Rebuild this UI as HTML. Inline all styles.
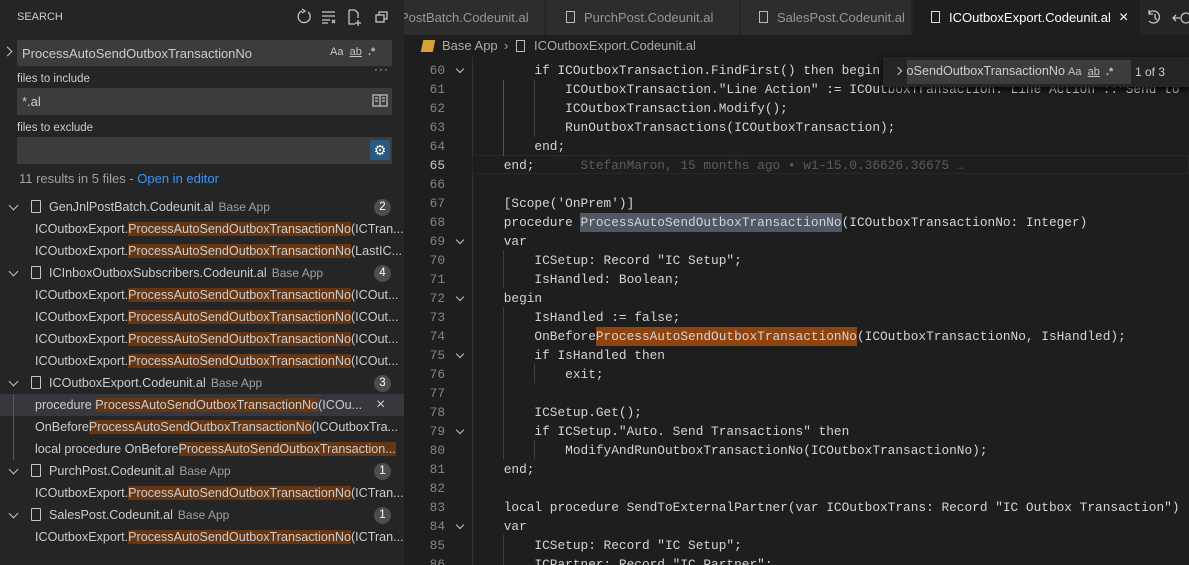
<!DOCTYPE html>
<html style="overflow:hidden;width:1189px;height:565px"><head><meta charset="utf-8"><style>
*{margin:0;padding:0;box-sizing:border-box}
body{width:1189px;height:565px;overflow:hidden;background:#1e1e1e;font-family:"Liberation Sans",sans-serif;color:#cccccc;position:relative}
#wrap{position:absolute;left:0;top:0;width:1189px;height:565px;overflow:hidden}
.abs{position:absolute}
#side{left:0;top:0;width:404px;height:565px;background:#252526}
.lbl{font-size:11.5px;color:#cccccc}
.inp{background:#3c3c3c;height:26px}
.row{position:absolute;left:0;width:404px;height:22px;line-height:22px;font-size:12.6px;white-space:nowrap;overflow:hidden}
.m{left:35px;width:369px}
.hl{background:#653613}
.fn{left:49px}
.ba{color:#a0a0a0;font-size:12px;margin-left:5px}
.badge{position:absolute;left:374px;top:3px;width:17px;height:17px;border-radius:50%;background:#4d4d4d;color:#fff;font-size:11.5px;line-height:17px;text-align:center}
.chev{position:absolute;left:10px;top:6px;width:7px;height:7px;border-right:1.3px solid #c5c5c5;border-bottom:1.3px solid #c5c5c5;transform:rotate(45deg)}
.fi{position:absolute;left:31px;top:4px;width:10px;height:13px;border:1.2px solid #c5c5c5;border-radius:1px}
#tabs{left:404px;top:0;width:785px;height:35px;background:#252526}
.tab{position:absolute;top:0;height:35px;line-height:35px;font-size:13px;color:#969696;white-space:nowrap;border-right:1px solid #252526;background:#2d2d2d}
.tfi{display:inline-block;width:9px;height:12px;border:1.2px solid #bbb;vertical-align:-1px;margin-right:9px}
.code{font-family:"Liberation Mono",monospace;font-size:12.8px;color:#d4d4d4;white-space:pre}
.ln{position:absolute;left:405px;width:40px;text-align:right;font-family:"Liberation Mono",monospace;font-size:12.8px;color:#858585;height:19px;line-height:19px}
.cl{position:absolute;left:473px;height:19px;line-height:19px}
.fold{position:absolute;left:457px;width:6px;height:6px;border-right:1.2px solid #c5c5c5;border-bottom:1.2px solid #c5c5c5;transform:rotate(45deg)}
.g{position:absolute;width:1px;background:#404040}
</style></head><body><div id="wrap">
<div id="side" class="abs">
 <div class="abs lbl" style="left:17px;top:11px;font-size:11px">SEARCH</div>
 <svg class="abs" style="left:294px;top:8px" width="100" height="18" viewBox="0 0 100 18" fill="none" stroke="#c5c5c5" stroke-width="1.3">
  <path d="M14 4 A6 6 0 1 1 8 3"/><path d="M8 1 L11 3 L8 5"/>
  <path d="M28 4h13M28 8h13M28 12h8M28 15h6M38 12l3 3M41 12l-3 3"/>
  <path d="M55 2h6l3 3v5M55 2v14h6M64 12v6M61 15h6"/>
  <rect x="82" y="7" width="8" height="7"/><path d="M85 7V4h8v7h-3"/>
 </svg>
 <div class="abs" style="left:4px;top:48px;width:7px;height:7px;border-right:1.3px solid #c5c5c5;border-top:1.3px solid #c5c5c5;transform:rotate(45deg)"></div>
 <div class="abs inp" style="left:17px;top:40px;width:375px;height:26px"></div>
 <div class="abs" style="left:22px;top:46px;font-size:13px;color:#cccccc">ProcessAutoSendOutboxTransactionNo</div>
 <div class="abs" style="left:330px;top:46px;font-size:11px;color:#c5c5c5">Aa &nbsp;<u>ab</u>&nbsp; <b>.*</b></div>
 <div class="abs" style="left:374px;top:62px;font-size:12px;color:#c5c5c5;letter-spacing:1px">···</div>
 <div class="abs lbl" style="left:17px;top:73px">files to include</div>
 <div class="abs inp" style="left:17px;top:88px;width:375px;height:27px"></div>
 <div class="abs" style="left:22px;top:94px;font-size:13px">*.al</div>
 <svg class="abs" style="left:372px;top:94px" width="16" height="14" fill="none" stroke="#c5c5c5" stroke-width="1.2"><rect x="1" y="1" width="14" height="11"/><path d="M8 1v11M3 4h3M3 7h3M10 4h3M10 7h3"/></svg>
 <div class="abs lbl" style="left:17px;top:122px">files to exclude</div>
 <div class="abs inp" style="left:17px;top:137px;width:375px;height:27px"></div>
 <div class="abs" style="left:370px;top:140px;width:20px;height:20px;background:#2a5a82;border-radius:2px;color:#fff;font-size:14px;text-align:center;line-height:20px">⚙</div>
 <div class="abs" style="left:19px;top:171px;font-size:13px;color:#a0a0a0">11 results in 5 files - <span style="color:#3794ff">Open in editor</span></div>

 <div class="row" style="top:196px"><div class="chev"></div><div class="fi"></div><span class="abs fn">GenJnlPostBatch.Codeunit.al<span class="ba">Base App</span></span><div class="badge">2</div></div>
 <div class="row m" style="top:218px">ICOutboxExport.<span class="hl">ProcessAutoSendOutboxTransactionNo</span>(ICTran...</div>
 <div class="row m" style="top:240px">ICOutboxExport.<span class="hl">ProcessAutoSendOutboxTransactionNo</span>(LastIC...</div>
 <div class="row" style="top:262px"><div class="chev"></div><div class="fi"></div><span class="abs fn">ICInboxOutboxSubscribers.Codeunit.al<span class="ba">Base App</span></span><div class="badge">4</div></div>
 <div class="row m" style="top:284px">ICOutboxExport.<span class="hl">ProcessAutoSendOutboxTransactionNo</span>(ICOut...</div>
 <div class="row m" style="top:306px">ICOutboxExport.<span class="hl">ProcessAutoSendOutboxTransactionNo</span>(ICOut...</div>
 <div class="row m" style="top:328px">ICOutboxExport.<span class="hl">ProcessAutoSendOutboxTransactionNo</span>(ICOut...</div>
 <div class="row m" style="top:350px">ICOutboxExport.<span class="hl">ProcessAutoSendOutboxTransactionNo</span>(ICOut...</div>
 <div class="row" style="top:372px"><div class="chev"></div><div class="fi"></div><span class="abs fn">ICOutboxExport.Codeunit.al<span class="ba">Base App</span></span><div class="badge">3</div></div>
 <div class="row" style="top:394px;background:#37373d"><span class="abs" style="left:35px">procedure <span class="hl">ProcessAutoSendOutboxTransactionNo</span>(ICOu...</span><span class="abs" style="left:376px;font-size:16px">×</span></div>
 <div class="row m" style="top:416px">OnBefore<span class="hl">ProcessAutoSendOutboxTransactionNo</span>(ICOutboxTra...</div>
 <div class="row m" style="top:438px">local procedure OnBefore<span class="hl">ProcessAutoSendOutboxTransaction...</span></div>
 <div class="abs" style="left:13px;top:394px;width:1px;height:66px;background:#585858"></div>
 <div class="row" style="top:460px"><div class="chev"></div><div class="fi"></div><span class="abs fn">PurchPost.Codeunit.al<span class="ba">Base App</span></span><div class="badge">1</div></div>
 <div class="row m" style="top:482px">ICOutboxExport.<span class="hl">ProcessAutoSendOutboxTransactionNo</span>(ICTran...</div>
 <div class="row" style="top:504px"><div class="chev"></div><div class="fi"></div><span class="abs fn">SalesPost.Codeunit.al<span class="ba">Base App</span></span><div class="badge">1</div></div>
 <div class="row m" style="top:526px">ICOutboxExport.<span class="hl">ProcessAutoSendOutboxTransactionNo</span>(ICTran...</div>
</div>

<div id="tabs" class="abs">
 <div class="tab" style="left:0;width:141px;overflow:hidden"><span style="margin-left:-4px">PostBatch.Codeunit.al</span></div>
 <div class="tab" style="left:142px;width:194px;padding-left:20px"><span class="tfi"></span>PurchPost.Codeunit.al</div>
 <div class="tab" style="left:337px;width:171px;padding-left:18px"><span class="tfi"></span>SalesPost.Codeunit.al</div>
 <div class="tab" style="left:509px;width:228px;padding-left:18px;background:#1e1e1e;color:#fff"><span class="tfi" style="border-color:#ddd"></span>ICOutboxExport.Codeunit.al<span style="position:absolute;left:206px;font-size:16px">×</span></div>
 <svg class="abs" style="left:742px;top:9px" width="43" height="18" fill="none" stroke="#c5c5c5" stroke-width="1.3"><path d="M3 4A6 6 0 1 1 3 12M3 1v4h4M9 5v4l2 2"/><path d="M34 9h-6M30 6l-3 3 3 3"/><circle cx="40" cy="9" r="5"/></svg>
</div>
<div class="abs" style="left:404px;top:35px;width:785px;height:22px;font-size:13px;line-height:22px;color:#a9a9a9">
 <span class="abs" style="left:18px;top:5px;width:12px;height:12px;background:#d8a13a;transform:skewX(-12deg)"></span>
 <span class="abs" style="left:38px">Base App</span><span class="abs" style="left:100px">›</span>
 <span class="abs" style="left:112px;top:5px;width:9px;height:12px;border:1.2px solid #bbb"></span>
 <span class="abs" style="left:130px">ICOutboxExport.Codeunit.al</span>
</div>

<div class="abs" style="left:472px;top:57px;width:1px;height:508px;background:#333"></div>
<div class="abs" style="left:472px;top:155px;width:717px;height:19px;border:1px solid #282828"></div>
<div class="abs" style="left:580px;top:213px;width:262px;height:19px;background:#4f5864"></div>
<div class="abs" style="left:596px;top:327px;width:261px;height:19px;background:#8f4410"></div>
<div class="g" style="left:503px;top:80px;height:76px;background:#555"></div>
<div class="g" style="left:534px;top:80px;height:57px"></div>
<div class="g" style="left:503px;top:250px;height:38px"></div>
<div class="g" style="left:503px;top:307px;height:152px"></div>
<div class="g" style="left:534px;top:364px;height:19px"></div>
<div class="g" style="left:534px;top:440px;height:19px"></div>
<div class="g" style="left:503px;top:535px;height:30px"></div>

<div class="code">
<div class="ln" style="top:61px">60</div><div class="cl" style="top:61px">        if ICOutboxTransaction.FindFirst() then begin</div>
<div class="ln" style="top:80px">61</div><div class="cl" style="top:80px">            ICOutboxTransaction."Line Action" := ICOutboxTransaction."Line Action"::"Send to</div>
<div class="ln" style="top:99px">62</div><div class="cl" style="top:99px">            ICOutboxTransaction.Modify();</div>
<div class="ln" style="top:118px">63</div><div class="cl" style="top:118px">            RunOutboxTransactions(ICOutboxTransaction);</div>
<div class="ln" style="top:137px">64</div><div class="cl" style="top:137px">        end;</div>
<div class="ln" style="top:156px;color:#c6c6c6">65</div><div class="cl" style="top:156px">    end;      <span style="color:#5c5c5c">StefanMaron, 15 months ago • w1-15.0.36626.36675 …</span></div>
<div class="ln" style="top:175px">66</div>
<div class="ln" style="top:194px">67</div><div class="cl" style="top:194px">    [Scope('OnPrem')]</div>
<div class="ln" style="top:213px">68</div><div class="cl" style="top:213px">    procedure ProcessAutoSendOutboxTransactionNo(ICOutboxTransactionNo: Integer)</div>
<div class="ln" style="top:232px">69</div><div class="cl" style="top:232px">    var</div>
<div class="ln" style="top:251px">70</div><div class="cl" style="top:251px">        ICSetup: Record "IC Setup";</div>
<div class="ln" style="top:270px">71</div><div class="cl" style="top:270px">        IsHandled: Boolean;</div>
<div class="ln" style="top:289px">72</div><div class="cl" style="top:289px">    begin</div>
<div class="ln" style="top:308px">73</div><div class="cl" style="top:308px">        IsHandled := false;</div>
<div class="ln" style="top:327px">74</div><div class="cl" style="top:327px">        OnBeforeProcessAutoSendOutboxTransactionNo(ICOutboxTransactionNo, IsHandled);</div>
<div class="ln" style="top:346px">75</div><div class="cl" style="top:346px">        if IsHandled then</div>
<div class="ln" style="top:365px">76</div><div class="cl" style="top:365px">            exit;</div>
<div class="ln" style="top:384px">77</div>
<div class="ln" style="top:403px">78</div><div class="cl" style="top:403px">        ICSetup.Get();</div>
<div class="ln" style="top:422px">79</div><div class="cl" style="top:422px">        if ICSetup."Auto. Send Transactions" then</div>
<div class="ln" style="top:441px">80</div><div class="cl" style="top:441px">            ModifyAndRunOutboxTransactionNo(ICOutboxTransactionNo);</div>
<div class="ln" style="top:460px">81</div><div class="cl" style="top:460px">    end;</div>
<div class="ln" style="top:479px">82</div>
<div class="ln" style="top:498px">83</div><div class="cl" style="top:498px">    local procedure SendToExternalPartner(var ICOutboxTrans: Record "IC Outbox Transaction")</div>
<div class="ln" style="top:517px">84</div><div class="cl" style="top:517px">    var</div>
<div class="ln" style="top:536px">85</div><div class="cl" style="top:536px">        ICSetup: Record "IC Setup";</div>
<div class="ln" style="top:555px;height:10px;overflow:hidden">86</div><div class="cl" style="top:555px;height:10px;overflow:hidden">        ICPartner: Record "IC Partner";</div>
</div>
<div class="fold" style="top:66px"></div><div class="fold" style="top:237px"></div><div class="fold" style="top:294px"></div>
<div class="fold" style="top:351px"></div><div class="fold" style="top:427px"></div><div class="fold" style="top:522px"></div>

<div class="abs" style="left:883px;top:57px;width:306px;height:30px;background:#252526;box-shadow:0 2px 6px #000"></div>
<div class="abs" style="left:895px;top:68px;width:6px;height:6px;border-right:1.2px solid #c5c5c5;border-top:1.2px solid #c5c5c5;transform:rotate(45deg)"></div>
<div class="abs" style="left:907px;top:60px;width:224px;height:24px;background:#3c3c3c"></div>
<div class="abs" style="left:907px;top:64px;width:158px;overflow:hidden;white-space:nowrap;direction:rtl;font-size:12.6px;color:#cccccc">ProcessAutoSendOutboxTransactionNo</div>
<div class="abs" style="left:1068px;top:66px;font-size:11px;color:#c5c5c5">Aa &nbsp;<u>ab</u>&nbsp; <b>.*</b></div>
<div class="abs" style="left:1135px;top:65px;font-size:12px;color:#cccccc">1 of 3</div>
</div></body></html>
